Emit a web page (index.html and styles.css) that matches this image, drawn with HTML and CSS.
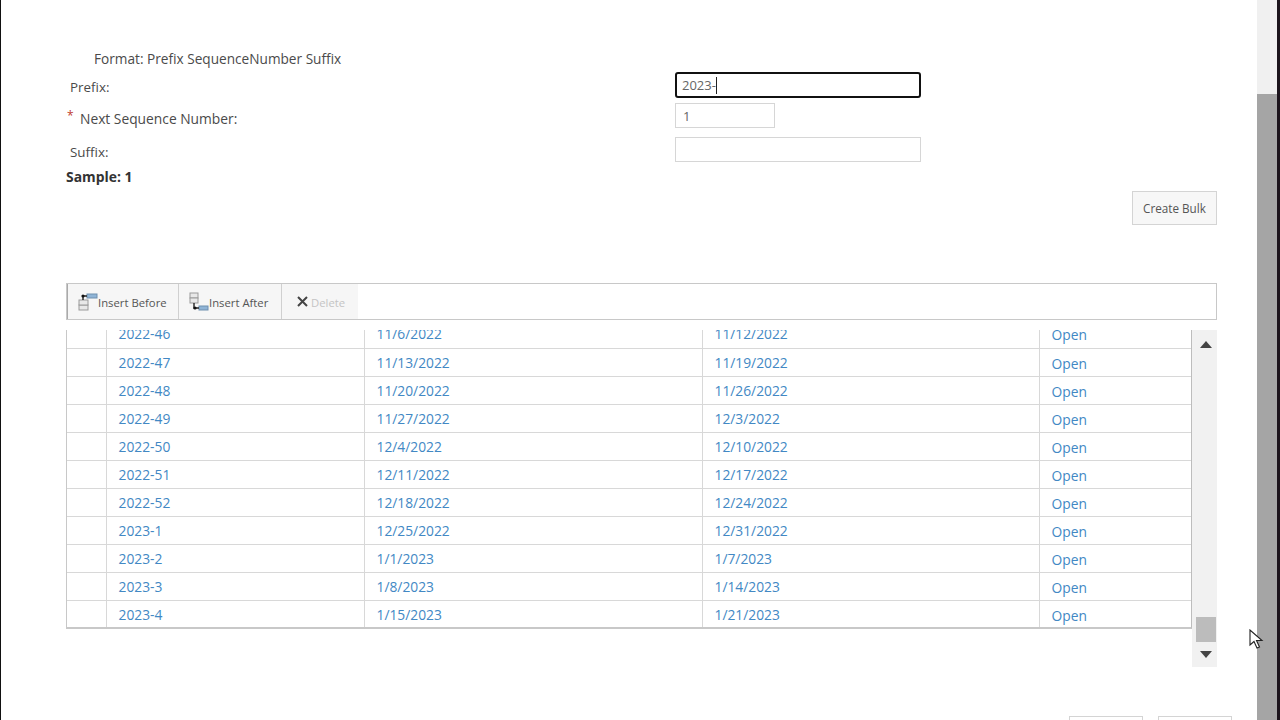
FILE: index.html
```html
<!DOCTYPE html>
<html lang="en">
<head>
<meta charset="utf-8">
<title>Bulk sequence</title>
<link rel="stylesheet" href="styles.css">
</head>
<body>
<div class="page">
  <main class="content">
    <div class="format">Format: Prefix SequenceNumber Suffix</div>
    <div class="field field-prefix">
      <label class="label">Prefix:</label>
      <div class="input input-wide input-focus">2023-<span class="caret"></span></div>
    </div>
    <div class="field field-next">
      <label class="label label-req"><span class="req">*</span>Next Sequence Number:</label>
      <div class="input input-short">1</div>
    </div>
    <div class="field field-suffix">
      <label class="label">Suffix:</label>
      <div class="input input-wide"></div>
    </div>
    <div class="sample">Sample: 1</div>
    <div class="bulk-row"><button class="btn bulk">Create Bulk</button></div>

    <div class="toolbar">
      <button class="tool">
        <svg class="tool-icon" width="20" height="20" viewBox="0 0 20 20"><rect x="1" y="13" width="9" height="5" fill="#e8e8e8" stroke="#9a9a9a"/><rect x="1" y="8" width="9" height="5" fill="#e8e8e8" stroke="#9a9a9a"/><rect x="9" y="2" width="10" height="4" fill="#8fb4d6" stroke="#6f8fae"/><path d="M5 8V4h4" fill="none" stroke="#222" stroke-width="1.4"/><circle cx="5" cy="4" r="1.6" fill="#111"/></svg><span class="tool-text">Insert Before</span>
      </button>
      <button class="tool">
        <svg class="tool-icon" width="20" height="20" viewBox="0 0 20 20"><rect x="1" y="1" width="8" height="5" fill="#e8e8e8" stroke="#9a9a9a"/><rect x="1" y="6" width="8" height="5" fill="#e8e8e8" stroke="#9a9a9a"/><rect x="10" y="14" width="9" height="4" fill="#8fb4d6" stroke="#6f8fae"/><path d="M5 11v5h5" fill="none" stroke="#222" stroke-width="1.4"/><circle cx="6" cy="16" r="1.6" fill="#111"/></svg><span class="tool-text">Insert After</span>
      </button>
      <button class="tool tool-off">
        <svg class="del-icon" width="11" height="11" viewBox="0 0 11 11"><path d="M1 1l9 9M10 1l-9 9" stroke="#444" stroke-width="2"/></svg><span class="tool-text">Delete</span>
      </button>
    </div>

    <div class="grid-wrap">
      <div class="grid-view">
        <table class="grid">
          <tr><td></td><td>2022-46</td><td>11/6/2022</td><td>11/12/2022</td><td class="open">Open</td></tr>
          <tr><td></td><td>2022-47</td><td>11/13/2022</td><td>11/19/2022</td><td class="open">Open</td></tr>
          <tr><td></td><td>2022-48</td><td>11/20/2022</td><td>11/26/2022</td><td class="open">Open</td></tr>
          <tr><td></td><td>2022-49</td><td>11/27/2022</td><td>12/3/2022</td><td class="open">Open</td></tr>
          <tr><td></td><td>2022-50</td><td>12/4/2022</td><td>12/10/2022</td><td class="open">Open</td></tr>
          <tr><td></td><td>2022-51</td><td>12/11/2022</td><td>12/17/2022</td><td class="open">Open</td></tr>
          <tr><td></td><td>2022-52</td><td>12/18/2022</td><td>12/24/2022</td><td class="open">Open</td></tr>
          <tr><td></td><td>2023-1</td><td>12/25/2022</td><td>12/31/2022</td><td class="open">Open</td></tr>
          <tr><td></td><td>2023-2</td><td>1/1/2023</td><td>1/7/2023</td><td class="open">Open</td></tr>
          <tr><td></td><td>2023-3</td><td>1/8/2023</td><td>1/14/2023</td><td class="open">Open</td></tr>
          <tr><td></td><td>2023-4</td><td>1/15/2023</td><td>1/21/2023</td><td class="open">Open</td></tr>
        </table>
      </div>
      <div class="grid-scroll">
        <span class="arrow arrow-up"></span>
        <span class="grid-thumb"></span>
        <span class="arrow arrow-down"></span>
      </div>
    </div>

    <div class="footer">
      <button class="btn foot"></button>
      <button class="btn foot"></button>
    </div>
  </main>
  <aside class="page-scroll"><div class="page-thumb"></div></aside>
</div>
<svg class="cursor" width="15" height="21" viewBox="0 0 15 21"><path d="M1 1v15l4-3.5 3 6.5 2.5-1-3-6.5H13z" fill="#fff" stroke="#222" stroke-width="1.1"/></svg>
</body>
</html>
```
FILE: styles.css
```css
* { box-sizing: border-box; }
html, body { margin: 0; height: 720px; overflow: hidden; background: #fff; }
body { font-family: "Open Sans", "Noto Sans", "Liberation Sans", sans-serif; font-size: 13px; color: #4a4a4a; position: relative; }
.page { display: flex; height: 720px; border-left: 1px solid #111; }
.content { flex: 1; min-width: 0; padding: 50px 38px 0 65px; overflow: hidden; }
.format { padding-left: 28px; height: 17px; line-height: 17px; font-size: 13.65px; }
.field { display: flex; align-items: flex-start; }
.field-prefix { margin-top: 6px; height: 25px; }
.field-next { margin-top: 5px; height: 25px; }
.field-suffix { margin-top: 9px; height: 25px; }
.label { width: 609px; flex: none; padding-left: 4px; font-size: 13.4px; line-height: 18px; padding-top: 5px; }
.label-req { padding-left: 0; display: flex; font-size: 13.8px; }
.req { color: #c0392b; width: 14px; font-size: 12px; line-height: 12px; padding-left: 1px; }
.field-next .label { padding-top: 7px; }
.field-suffix .label { padding-top: 6px; }
.input { height: 25px; border: 1px solid #d6d6d6; background: #fff; padding-left: 7px; line-height: 24px; font-size: 13px; color: #666; }
.input-wide { width: 246px; }
.input-short { width: 100px; }
.input-focus { border: 2px solid #111; border-radius: 3px; padding-left: 5px; line-height: 21px; display: flex; align-items: center; height: 26px; margin-top: -1px; }
.caret { width: 1px; height: 17px; background: #222; }
.sample { margin-top: 6px; font-weight: 700; font-size: 13.9px; line-height: 18px; color: #333; }
.bulk-row { display: flex; justify-content: flex-end; margin-top: 5px; }
.btn { background: #f7f7f7; border: 1px solid #d4d4d4; font: inherit; color: #555; padding: 0; }
.bulk { width: 85px; height: 34px; font-size: 11.7px; }
.toolbar { margin-top: 58px; height: 37px; border: 1px solid #c8c8c8; display: flex; background: #fff; }
.tool { display: flex; align-items: center; height: 35px; background: #f6f6f6; border: 0; border-right: 1px solid #d0d0d0; font: inherit; font-size: 11.3px; color: #555; padding: 0; }
.tool-text { padding-top: 2px; }
.tool:nth-child(1) { width: 112px; padding-left: 10px; border-left: 1px solid #aaa; }
.tool:nth-child(2) { width: 103px; padding-left: 10px; }
.tool-off { width: 76px; padding-left: 15px; color: #c4c4c4; border-right: 0; }
.tool-icon { flex: none; }
.del-icon { margin-right: 3px; flex: none; }
.grid-wrap { display: flex; margin-top: 10px; height: 337px; align-items: flex-start; }
.grid-view { width: 1126px; height: 299px; overflow: hidden; border-left: 1px solid #c8c8c8; border-right: 1px solid #bdbdbd; border-bottom: 2px solid #c8c8c8; }
.grid { width: 1124px; border-collapse: collapse; table-layout: fixed; margin-top: -10px; }
.grid td { height: 28px; padding: 0 0 0 12px; border-bottom: 1px solid #d8d8d8; border-right: 1px solid #d8d8d8; color: #4288c4; font-size: 13.8px; white-space: nowrap; }
.grid td:nth-child(1) { width: 39px; }
.grid td:nth-child(2) { width: 258px; }
.grid td:nth-child(3) { width: 338px; }
.grid td:nth-child(4) { width: 337px; }
.grid td:last-child { border-right: 0; padding-top: 2px; }
.grid tr:last-child td { border-bottom: 0; }
.grid-scroll { width: 25px; padding-left: 2px; height: 337px; background: #f1f1f1; display: flex; flex-direction: column; align-items: center; }
.arrow { width: 0; height: 0; border-left: 6px solid transparent; border-right: 6px solid transparent; }
.arrow-up { border-bottom: 7px solid #444; margin-top: 11px; }
.grid-thumb { width: 20px; height: 25px; background: #bcbcbc; margin-top: 269px; }
.arrow-down { border-top: 7px solid #444; margin-top: 9px; }
.footer { display: flex; justify-content: flex-end; gap: 15px; margin-top: 49px; margin-right: -15px; }
.foot { width: 74px; height: 30px; flex: none; background: #fff; }
.page-scroll { width: 25px; flex: none; background: #f0f0f0; padding-left: 2px; background-clip: content-box; border-right: 3px solid #1c141c; }
.page-thumb { margin-top: 94px; height: 626px; background: #a5a5a5; }
.cursor { position: absolute; left: 1249px; top: 629px; }
```
